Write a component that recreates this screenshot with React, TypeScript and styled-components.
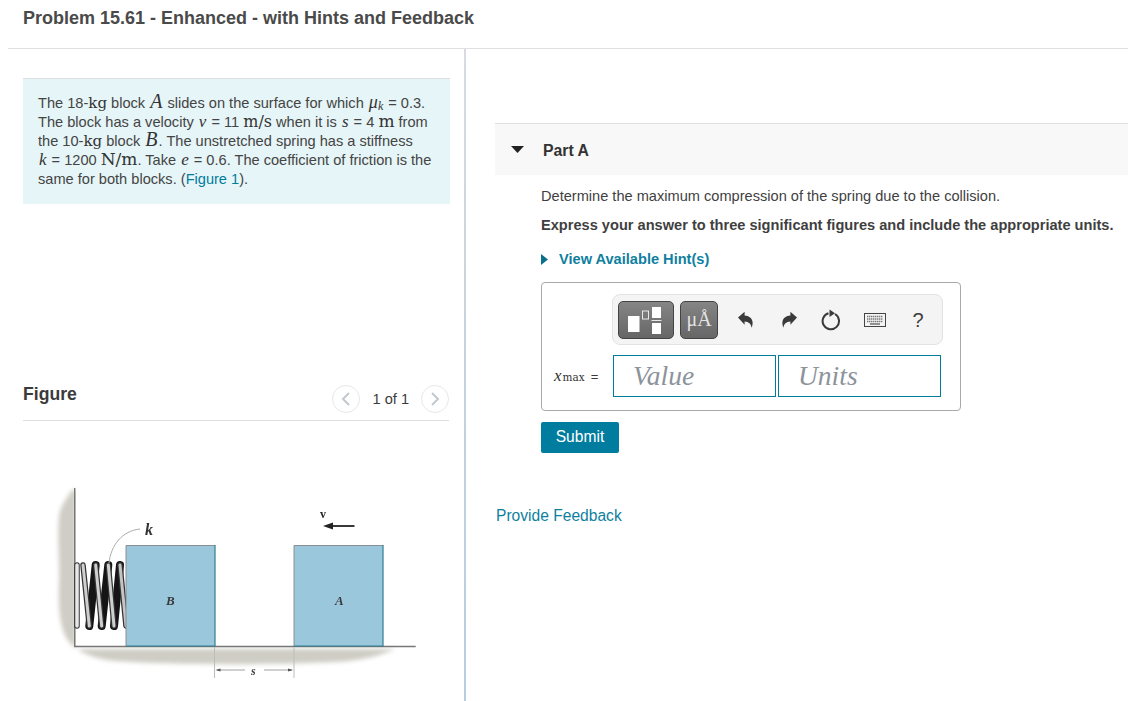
import React from 'react';
import styled, { createGlobalStyle } from 'styled-components';

const GlobalStyle = createGlobalStyle`
  html, body {
    margin: 0;
    padding: 0;
    height: 701px;
    overflow: hidden;
    background: #fff;
    font-family: "Liberation Sans", Arial, sans-serif;
    color: #3a3a3a;
  }
`;

const Header = styled.header`
  height: 48px;
  margin-left: 8px;
  padding-left: 15px;
  display: flex;
  align-items: center;
  border-bottom: 1px solid #e0e0e0;
  box-sizing: content-box;
`;

const Title = styled.h1`
  margin: 0 0 12px;
  font-size: 18px;
  font-weight: 700;
  color: #4a4a4a;
`;

const Main = styled.main`
  display: flex;
  height: 652px;
`;

const LeftColumn = styled.section`
  width: 426px;
  padding: 29px 15px 0 23px;
  border-right: 2px solid;
  border-image: linear-gradient(#d8dce0, #c6d2dc 45%, #b7cde2) 1;
  flex: none;
`;

const Statement = styled.div`
  background: #e6f5f7;
  border-top: 1px solid #dcdfe2;
  padding: 15px 13px 15px 15px;
  height: 95px;
  font-size: 14.6px;
  line-height: 19px;
  color: #444;
  white-space: nowrap;
  margin-right: -1px;
`;

const MathUnit = styled.span<{ $size?: number }>`
  font-family: "DejaVu Serif", "Liberation Serif", serif;
  font-size: ${(p) => p.$size ?? 15}px;
  line-height: 0;
  color: #333;
`;

const MathVar = styled.i<{ $size?: number }>`
  font-family: "Liberation Serif", "DejaVu Serif", serif;
  font-size: ${(p) => p.$size ?? 17}px;
  font-weight: 500;
  line-height: 0;
  margin: 0 1px;
  color: #333;
`;

const Sub = styled.span`
  font-size: 12px;
  line-height: 0;
  vertical-align: -2px;
`;

const TextLink = styled.a`
  color: #007c9e;
  text-decoration: none;
`;

const FigureBar = styled.div`
  margin-top: 174px;
  height: 42px;
  display: flex;
  align-items: center;
  justify-content: space-between;
  border-bottom: 1px solid #dedede;
`;

const FigureLabel = styled.h2`
  margin: 0 0 10px;
  font-size: 17.6px;
  font-weight: 700;
  color: #3a3a3a;
`;

const Pager = styled.div`
  display: flex;
  align-items: center;
  gap: 12px;
  font-size: 14.6px;
  margin: 0 0 1px 0;
`;

const PagerButton = styled.span`
  width: 28px;
  height: 28px;
  box-sizing: border-box;
  border: 1px solid #e8e8e8;
  border-radius: 50%;
  display: flex;
  align-items: center;
  justify-content: center;
`;

const Illustration = styled.svg`
  display: block;
  margin: 54px 0 0 17px;
  filter: blur(0.35px);
`;

const RightColumn = styled.section`
  flex: 1;
  padding: 74px 0 0 29px;
  min-width: 0;
`;

const PartBar = styled.div`
  height: 51px;
  background: #f8f8f8;
  border-top: 1px solid #dfdfdf;
  display: flex;
  align-items: center;
  padding-left: 16px;
  gap: 19px;
`;

const PartTitle = styled.span`
  font-size: 15.8px;
  font-weight: 700;
  color: #333;
  padding-top: 2px;
`;

const PartBody = styled.div`
  padding: 13px 0 0 46px;
`;

const Paragraph = styled.p<{ $bold?: boolean }>`
  margin: 0 0 13px;
  font-size: 14.6px;
  line-height: 16px;
  font-weight: ${(p) => (p.$bold ? 700 : 400)};
  color: #3f3f3f;
  white-space: nowrap;
`;

const HintToggle = styled.a`
  display: flex;
  align-items: center;
  gap: 11px;
  margin-top: 18px;
  font-size: 14.6px;
  line-height: 16px;
  font-weight: 700;
  color: #0f7fa0;
`;

const AnswerBox = styled.div`
  margin-top: 15px;
  width: 418px;
  height: 116px;
  border: 1px solid #a9a9a9;
  border-radius: 4px;
  padding: 11px 0 0 0;
  display: flex;
  flex-direction: column;
  align-items: flex-end;
`;

const Toolbar = styled.div`
  width: 329px;
  height: 49px;
  margin-right: 17px;
  box-sizing: content-box;
  background: #f4f4f4;
  border: 1px solid #e3e3e3;
  border-radius: 8px;
  display: flex;
  align-items: center;
  padding: 0;
`;

const TemplateButton = styled.button<{ $wide?: boolean }>`
  flex: none;
  width: ${(p) => (p.$wide ? 56 : 38)}px;
  height: 38px;
  margin-left: ${(p) => (p.$wide ? 5 : 6)}px;
  padding: 0;
  border: 1px solid #444;
  border-radius: 5px;
  background: linear-gradient(#858585, #666);
  display: flex;
  align-items: center;
  justify-content: center;
  color: #e4e4e4;
  font-family: "Liberation Serif", serif;
  font-size: 20px;
`;

const ToolIcon = styled.span<{ $width: number }>`
  flex: none;
  width: ${(p) => p.$width}px;
  padding-top: 1px;
  display: flex;
  justify-content: center;
  align-items: center;
  font-size: 20px;
  color: #3d3d3d;
`;

const InputRow = styled.div`
  margin-top: 10px;
  width: 100%;
  display: flex;
  align-items: center;
`;

const VarLabel = styled.span`
  width: 71px;
  box-sizing: border-box;
  padding-left: 11px;
  font-size: 13px;
  white-space: nowrap;
`;

const EqualsSign = styled.span`
  margin-left: 6px;
`;

const EntryInput = styled.div`
  width: 163px;
  height: 42px;
  box-sizing: border-box;
  border: 1px solid #007c9e;
  margin-right: 2px;
  padding-left: 19px;
  display: flex;
  align-items: center;
  font-family: "Liberation Serif", serif;
  font-style: italic;
  font-size: 27.5px;
  color: #8c939b;
`;

const SubmitButton = styled.button`
  display: block;
  margin-top: 11px;
  width: 78px;
  height: 31px;
  padding: 0 0 2px;
  border: 0;
  border-radius: 2px;
  background: #007c9e;
  color: #fff;
  font-family: "Liberation Sans", Arial, sans-serif;
  font-size: 15.6px;
`;

const Feedback = styled.a`
  display: block;
  margin: 54px 0 0 1px;
  font-size: 15.6px;
  color: #0f7fa0;
`;

const Chevron = ({ dir }: { dir: 'left' | 'right' }) => (
  <svg width="10" height="14" viewBox="0 0 10 14" fill="none" stroke="#c2c8ce" strokeWidth="2">
    <path d={dir === 'left' ? 'M8 1 2 7l6 6' : 'M2 1l6 6-6 6'} />
  </svg>
);

const Spring = () => {
  const tops = [55.7, 68.3, 80];
  const bottoms = [49.3, 61.7, 74, 85];
  return (
    <g fill="none" strokeLinecap="round">
      {tops.map((t, i) => (
        <path key={`b${i}`} d={`M${bottoms[i]} 151L${t} 90`} stroke="#141414" strokeWidth="8" />
      ))}
      <path d="M37 90V151" stroke="#333" strokeWidth="5.5" />
      <path d="M37 90V151" stroke="#e8e8e8" strokeWidth="3.5" />
      {tops.map((t, i) => (
        <g key={`f${i}`}>
          <path d={`M${i === 0 ? 43 : tops[i - 1]} 90L${bottoms[i]} 151`} stroke="#333" strokeWidth="5.5" />
          <path d={`M${i === 0 ? 43 : tops[i - 1]} 90L${bottoms[i]} 151`} stroke="#cfcfcf" strokeWidth="3" />
        </g>
      ))}
      <path d="M80 90L86 151" stroke="#333" strokeWidth="5.5" />
      <path d="M80 90L86 151" stroke="#c4c4c4" strokeWidth="3" />
    </g>
  );
};

const Diagram = () => (
  <Illustration width="400" height="226" viewBox="0 0 400 226">
    <defs>
      <filter id="soft" x="-10%" y="-10%" width="120%" height="120%">
        <feGaussianBlur stdDeviation="2" />
      </filter>
    </defs>
    <path
      d="M32 15C28 22 20 30 19 42c-2 20 1 45 0 70-1 25 2 42 8 52 6 10 24 20 48 22 60 4 150 4 220 1 25-1 45-6 60-13H36V15Z"
      fill="#cfcdc5"
      filter="url(#soft)"
    />
    <path d="M36 13H60V170H36Z" fill="#fff" />
    <path d="M34.7 13V171.5H375.7" fill="none" stroke="#777" strokeWidth="1.4" />
    <path d="M174.5 172V203M254 172V203" stroke="#bdbdbd" strokeWidth="1" />
    <path d="M177 195H205M224 195H252" stroke="#888" strokeWidth="0.8" />
    <path d="M175.5 195l5-1.6v3.2ZM253 195l-5-1.6v3.2Z" fill="#555" />
    <text x="211" y="200" fontFamily="Liberation Serif, serif" fontStyle="italic" fontWeight="700" fontSize="12" fill="#444">s</text>
    <Spring />
    <path d="M69 88C71 70 82 56 100 54" fill="none" stroke="#aaa" strokeWidth="1" />
    <text x="105" y="60" fontFamily="Liberation Serif, serif" fontStyle="italic" fontWeight="700" fontSize="16" fill="#333">k</text>
    <path d="M86 70.5H175V171H86Z" fill="#9bc7dd" />
    <path d="M86 171V70.5H175" fill="none" stroke="#8b8f93" strokeWidth="1" />
    <path d="M175 70V171H86" fill="none" stroke="#2f7f93" strokeWidth="1.2" />
    <path d="M254 70.5H343V171H254Z" fill="#9bc7dd" />
    <path d="M254 171V70.5H343" fill="none" stroke="#8b8f93" strokeWidth="1" />
    <path d="M343 70V171H254" fill="none" stroke="#2f7f93" strokeWidth="1.2" />
    <text x="126" y="130" fontFamily="Liberation Serif, serif" fontStyle="italic" fontWeight="700" fontSize="13" fill="#3a3a3a">B</text>
    <text x="295" y="130" fontFamily="Liberation Serif, serif" fontStyle="italic" fontWeight="700" fontSize="13" fill="#3a3a3a">A</text>
    <text x="280" y="43" fontFamily="Liberation Serif, serif" fontWeight="700" fontSize="12" fill="#222">v</text>
    <path d="M291 51H314.5" stroke="#222" strokeWidth="1.8" />
    <path d="M283 51l10-3.6v7.2Z" fill="#222" />
  </Illustration>
);

const MatrixIcon = () => (
  <svg width="38" height="30" viewBox="0 0 38 30">
    <rect x="1" y="11" width="11.5" height="16" fill="#fff" />
    <rect x="15.5" y="6" width="6" height="8" fill="none" stroke="#e8e8e8" strokeWidth="1" />
    <rect x="25" y="2" width="9" height="11" fill="#fff" />
    <rect x="24.5" y="15" width="10" height="1" fill="#e8e8e8" />
    <rect x="25" y="18" width="9" height="11" fill="#fff" />
  </svg>
);

const UndoIcon = ({ flip }: { flip?: boolean }) => (
  <svg width="17" height="18" viewBox="0 0 17 18" style={flip ? { transform: 'scaleX(-1)' } : undefined}>
    <path
      d="M1 6.5 7.6.8v3.6c4.4.2 7.6 2.6 8 6.8.1 1.8-.3 3.8-1 5.6-.4-3.5-2.7-6-7-6.2v3.2Z"
      fill="#3a3a3a"
    />
  </svg>
);

const ResetIcon = () => (
  <svg width="21" height="22" viewBox="0 0 21 22" fill="none">
    <path d="M14 5A8.2 8.2 0 1 1 7.5 4.2" stroke="#3a3a3a" strokeWidth="2" />
    <path d="M8.5 0.4 14 4.2 8.5 8Z" fill="#3a3a3a" />
  </svg>
);

const KeyboardIcon = () => (
  <svg width="22" height="14" viewBox="0 0 22 14">
    <rect x="0.5" y="0.5" width="21" height="13" fill="#f4f4f4" stroke="#444" />
    <path
      d="M3 3.5h16M3 6h16"
      stroke="#777"
      strokeWidth="1.4"
      strokeDasharray="1.4 .6"
    />
    <path d="M3 8.5h16" stroke="#777" strokeWidth="1.4" strokeDasharray="1.4 .6" />
    <path d="M6 11h10" stroke="#666" strokeWidth="1.4" />
  </svg>
);

export default function App() {
  return (
    <>
      <GlobalStyle />
      <Header>
        <Title>Problem 15.61 - Enhanced - with Hints and Feedback</Title>
      </Header>
      <Main>
        <LeftColumn>
          <Statement>
            The 18-<MathUnit>kg</MathUnit> block <MathVar $size={20}>A</MathVar> slides on the surface for which{' '}
            <MathVar $size={18}>μ<Sub>k</Sub></MathVar> = 0.3.
            <br />
            The block has a velocity <MathVar>v</MathVar> = 11 <MathUnit $size={16}>m/s</MathUnit> when it is <MathVar>s</MathVar> = 4{' '}
            <MathUnit $size={17}>m</MathUnit> from
            <br />
            the 10-<MathUnit>kg</MathUnit> block <MathVar $size={20}>B</MathVar>. The unstretched spring has a stiffness
            <br />
            <MathVar>k</MathVar> = 1200 <MathUnit $size={17}>N/m</MathUnit>. Take <MathVar>e</MathVar> = 0.6. The coefficient of friction is the
            <br />
            same for both blocks. (<TextLink>Figure 1</TextLink>).
          </Statement>
          <FigureBar>
            <FigureLabel>Figure</FigureLabel>
            <Pager>
              <PagerButton>
                <Chevron dir="left" />
              </PagerButton>
              <span>1 of 1</span>
              <PagerButton>
                <Chevron dir="right" />
              </PagerButton>
            </Pager>
          </FigureBar>
          <Diagram />
        </LeftColumn>
        <RightColumn>
          <PartBar>
            <svg width="13" height="7" viewBox="0 0 13 7">
              <path d="M0 0h13L6.5 7Z" fill="#222" />
            </svg>
            <PartTitle>Part A</PartTitle>
          </PartBar>
          <PartBody>
            <Paragraph>Determine the maximum compression of the spring due to the collision.</Paragraph>
            <Paragraph $bold>Express your answer to three significant figures and include the appropriate units.</Paragraph>
            <HintToggle>
              <svg width="7" height="11" viewBox="0 0 7 11">
                <path d="M0 0l7 5.5L0 11Z" fill="#0b6f8e" />
              </svg>
              View Available Hint(s)
            </HintToggle>
            <AnswerBox>
              <Toolbar>
                <TemplateButton $wide>
                  <MatrixIcon />
                </TemplateButton>
                <TemplateButton>μÅ</TemplateButton>
                <ToolIcon $width={55}>
                  <UndoIcon />
                </ToolIcon>
                <ToolIcon $width={33}>
                  <UndoIcon flip />
                </ToolIcon>
                <ToolIcon $width={51}>
                  <ResetIcon />
                </ToolIcon>
                <ToolIcon $width={35}>
                  <KeyboardIcon />
                </ToolIcon>
                <ToolIcon $width={52}>?</ToolIcon>
              </Toolbar>
              <InputRow>
                <VarLabel>
                  <MathVar $size={17}>x</MathVar>
                  <MathUnit $size={10.5}>max</MathUnit>
                  <EqualsSign>=</EqualsSign>
                </VarLabel>
                <EntryInput>Value</EntryInput>
                <EntryInput>Units</EntryInput>
              </InputRow>
            </AnswerBox>
            <SubmitButton>Submit</SubmitButton>
          </PartBody>
          <Feedback>Provide Feedback</Feedback>
        </RightColumn>
      </Main>
    </>
  );
}
